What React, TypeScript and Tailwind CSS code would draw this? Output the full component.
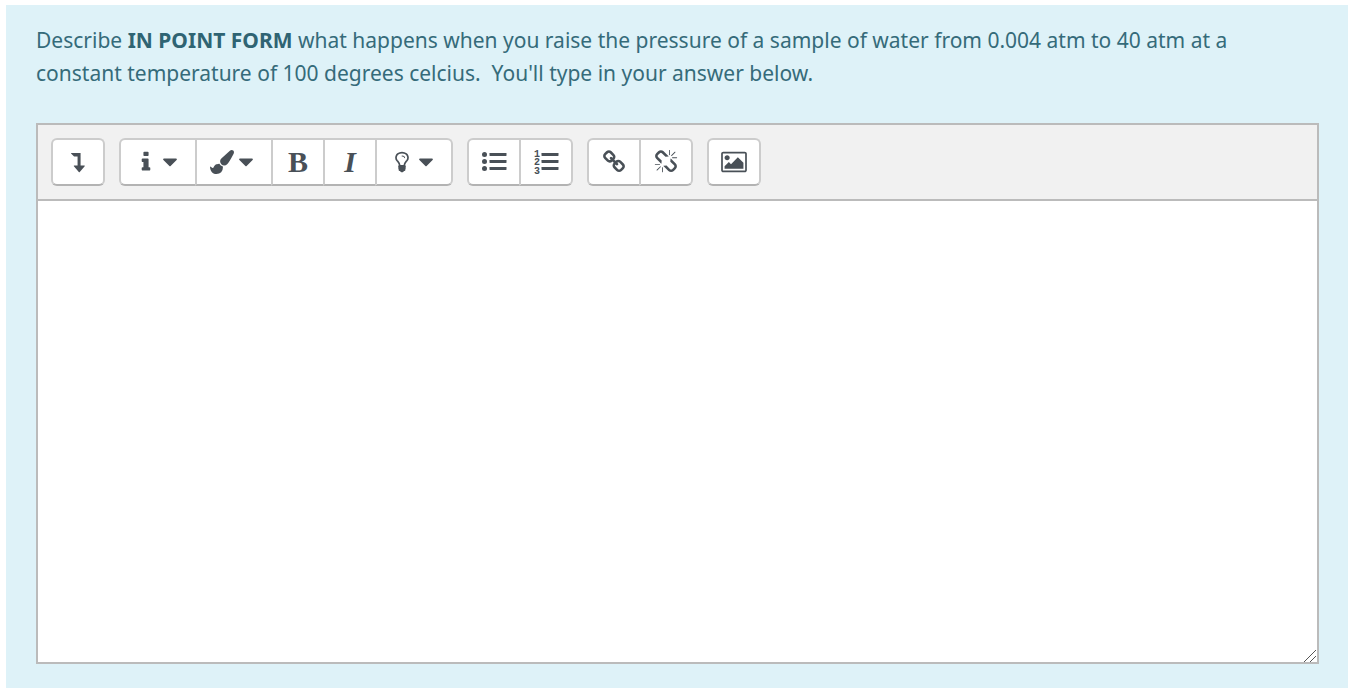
import type { ReactNode } from 'react';
import { clsx } from 'clsx';

const icons = {
	caret: 'M1408 704q0 26-19 45l-448 448q-19 19-45 19t-45-19l-448-448q-19-19-19-45t19-45 45-19h896q26 0 45 19t19 45z',
	toggle: 'M384 224h704v928h288q28 0 28 30q0 12-8 22l-368 430q-36 36-72 0l-368-430q-8-10-8-22q0-30 28-30h256v-672h-256q-14 0-24-10l-208-210q-12-36 8-36z',
	info: 'M1216 1344v128q0 26-19 45t-45 19h-512q-26 0-45-19t-19-45v-128q0-26 19-45t45-19h64v-384h-64q-26 0-45-19t-19-45v-128q0-26 19-45t45-19h384q26 0 45 19t19 45v576h64q26 0 45 19t19 45zm-128-1152v192q0 26-19 45t-45 19h-256q-26 0-45-19t-19-45v-192q0-26 19-45t45-19h256q26 0 45 19t19 45z',
	brush: 'M1615 0q70 0 122.5 46.5t52.5 116.5q0 63-45 151-332 629-465 752-97 91-218 91-126 0-216.5-92.5t-90.5-219.5q0-128 92-212l638-579q59-54 130-54zm-909 1034q39 76 106.5 130t150.5 76l1 71q4 213-129.5 347t-348.5 134q-123 0-218-46.5t-152.5-127.5-86.5-183-29-220q7 5 41 30t62 44.5 59 36.5 46 17q41 0 55-37 25-66 57.5-112.5t69.5-76 88-47.5 103-25.5 125-10.5z',
	bulb: 'M1120 576q0 13-9.5 22.5t-22.5 9.5-22.5-9.5-9.5-22.5q0-46-54-71t-106-25q-13 0-22.5-9.5t-9.5-22.5 9.5-22.5 22.5-9.5q50 0 99.5 16t87 54 37.5 90zm160 0q0-72-34.5-134t-90-101.5-123-62-136.5-22.5-136.5 22.5-123 62-90 101.5-34.5 134q0 101 68 180 10 11 30.5 33t30.5 33q128 153 141 298h228q13-145 141-298 10-11 30.5-33t30.5-33q68-79 68-180zm128 0q0 155-103 268-45 49-74.5 87t-59.5 95.5-34 107.5q47 28 47 82 0 37-25 64 25 27 25 64 0 52-45 81 13 23 13 47 0 46-31.5 71t-77.5 25q-20 44-60 70t-87 26-87-26-60-70q-46 0-77.5-25t-31.5-71q0-24 13-47-45-29-45-81 0-37 25-64-25-27-25-64 0-54 47-82-4-50-34-107.5t-59.5-95.5-74.5-87q-103-113-103-268 0-99 44.5-184.5t117-142 164-89 186.5-32.5 186.5 32.5 164 89 117 142 44.5 184.5z',
	link: 'M1520 1216q0-40-28-68l-208-208q-28-28-68-28-42 0-72 32 3 3 19 18.5t21.5 21.5 15 19 13 25.5 3.5 27.5q0 40-28 68t-68 28q-15 0-27.5-3.5t-25.5-13-19-15-21.5-21.5-18.5-19q-33 31-33 73 0 40 28 68l206 207q27 27 68 27 40 0 68-26l147-146q28-28 28-67zm-703-705q0-40-28-68l-206-207q-28-28-68-28-39 0-68 27l-147 146q-28 28-28 67 0 40 28 68l208 208q27 27 68 27 42 0 72-31-3-3-19-18.5t-21.5-21.5-15-19-13-25.5-3.5-27.5q0-40 28-68t68-28q15 0 27.5 3.5t25.5 13 19 15 21.5 21.5 18.5 19q33-31 33-73zm895 705q0 120-85 203l-147 146q-83 83-203 83-121 0-204-85l-206-207q-83-83-83-203 0-123 88-209l-88-88q-86 88-208 88-120 0-204-84l-208-208q-84-84-84-204t85-203l147-146q83-83 203-83 121 0 204 85l206 207q83 83 83 203 0 123-88 209l88 88q86-88 208-88 120 0 204 84l208 208q84 84 84 204z',
	unlink: 'M503 1271l-256 256q-10 9-23 9-12 0-23-9-9-10-9-23t9-23l256-256q10-9 23-9t23 9q9 10 9 23t-9 23zm169 41v320q0 14-9 23t-23 9-23-9-9-23v-320q0-14 9-23t23-9 23 9 9 23zm-224-224q0 14-9 23t-23 9h-320q-14 0-23-9t-9-23 9-23 23-9h320q14 0 23 9t9 23zm1264 128q0 120-85 203l-147 146q-83 83-203 83-121 0-204-85l-334-335q-21-21-42-56l239-18 273 274q28 28 68 27.5t68-27.5l147-146q28-28 28-67 0-40-28-68l-274-275 18-239q35 21 56 42l336 336q84 86 84 204zm-617-724l-239 18-273-274q-28-28-68-28-39 0-68 27l-147 146q-28 28-28 67 0 40 28 68l274 274-18 240q-35-21-56-42l-336-336q-84-86-84-204 0-120 85-203l147-146q83-83 203-83 121 0 204 85l334 335q21 21 42 56zm633 84q0 14-9 23t-23 9h-320q-14 0-23-9t-9-23 9-23 23-9h320q14 0 23 9t9 23zm-544-544v320q0 14-9 23t-23 9-23-9-9-23v-320q0-14 9-23t23-9 23 9 9 23zm407 151l-256 256q-11 9-23 9t-23-9q-9-10-9-23t9-23l256-256q10-9 23-9t23 9q9 10 9 23t-9 23z',
	picture: 'M576 576q0 80-56 136t-136 56-136-56-56-136 56-136 136-56 136 56 56 136zm1024 384v448h-1408v-192l320-320 160 160 512-512zm96-704h-1600q-13 0-22.5 9.5t-9.5 22.5v1216q0 13 9.5 22.5t22.5 9.5h1600q13 0 22.5-9.5t9.5-22.5v-1216q0-13-9.5-22.5t-22.5-9.5zm160 32v1216q0 66-47 113t-113 47h-1600q-66 0-113-47t-47-113v-1216q0-66 47-113t113-47h1600q66 0 113 47t47 113z',
};

function Icon({ name, className }: { name: keyof typeof icons; className?: string }) {
	return (
		<svg
			viewBox="0 0 1792 1792"
			fill="currentColor"
			aria-hidden="true"
			className={clsx('h-6 w-6 shrink-0 overflow-visible', className)}
		>
			<path d={icons[name]} />
		</svg>
	);
}

function BulletList() {
	return (
		<svg viewBox="0 0 24 24" fill="currentColor" aria-hidden="true" className="h-6 w-6 overflow-visible">
			{[4.5, 11.5, 18.5].map((y) => (
				<g key={y}>
					<circle cx="2.5" cy={y} r="2.5" />
					<rect x="7.5" y={y - 1.5} width="17" height="3" rx="0.4" />
				</g>
			))}
		</svg>
	);
}

function NumberedList() {
	return (
		<svg viewBox="0 0 24 24" fill="currentColor" aria-hidden="true" className="h-6 w-6 overflow-visible">
			{[4.5, 11.5, 18.5].map((y, i) => (
				<g key={y}>
					<text
						x="3"
						y={y + 2 + i * 1.5}
						textAnchor="middle"
						fontFamily="Liberation Mono, monospace"
						fontSize="10"
						fontWeight="700"
					>
						{i + 1}
					</text>
					<rect x="7.5" y={y - 1.5} width="17" height="3" rx="0.4" />
				</g>
			))}
		</svg>
	);
}

function ToolButton({ label, menu, children }: { label: string; menu?: boolean; children: ReactNode }) {
	return (
		<button
			type="button"
			aria-label={label}
			aria-haspopup={menu ? 'menu' : undefined}
			className={clsx(
				'-ml-[2px] flex h-12 items-center justify-center border-2 border-[#ccc] border-b-[#b3b3b3] bg-white text-[#495057] first:ml-0 first:rounded-l-md last:rounded-r-md hover:bg-gray-100',
				menu ? 'w-[78px]' : 'w-[54px]',
			)}
		>
			{children}
			{menu && <Icon name="caret" />}
		</button>
	);
}

function ToolGroup({ children }: { children: ReactNode }) {
	return <div className="flex">{children}</div>;
}

export default function App() {
	return (
		<div className="flex min-h-screen flex-col bg-white pt-[5px] pl-[6px] font-['Noto_Sans',sans-serif]">
			<main className="grow bg-[#def2f8] pt-[19px] pr-[29px] pb-6 pl-[30px] text-[#356b7a]">
				<label htmlFor="answer" className="mb-[33px] block pr-4 text-[21px] leading-[33px]">
					Describe <strong className="text-[#2f6473]">IN POINT FORM</strong> what happens when you raise the
					pressure of a sample of water from 0.004 atm to 40 atm at a constant temperature of 100 degrees
					celcius.&nbsp; You'll type in your answer below.
				</label>

				<div className="border-2 border-[#bbb] bg-white">
					<div
						role="toolbar"
						aria-label="Editor"
						className="flex flex-wrap gap-[14px] border-b-2 border-[#bbb] bg-[#f1f1f1] p-[13px]"
					>
						<ToolGroup>
							<ToolButton label="Show more buttons">
								<Icon name="toggle" />
							</ToolButton>
						</ToolGroup>
						<ToolGroup>
							<ToolButton label="Paragraph styles" menu>
								<Icon name="info" />
							</ToolButton>
							<ToolButton label="Font colour" menu>
								<Icon name="brush" />
							</ToolButton>
							<ToolButton label="Bold">
								<span className="font-['Liberation_Serif',serif] text-[30px] leading-6 font-bold">B</span>
							</ToolButton>
							<ToolButton label="Italic">
								<span className="font-['Liberation_Serif',serif] text-[30px] leading-6 font-bold italic">I</span>
							</ToolButton>
							<ToolButton label="Hints" menu>
								<Icon name="bulb" />
							</ToolButton>
						</ToolGroup>
						<ToolGroup>
							<ToolButton label="Unordered list">
								<BulletList />
							</ToolButton>
							<ToolButton label="Ordered list">
								<NumberedList />
							</ToolButton>
						</ToolGroup>
						<ToolGroup>
							<ToolButton label="Link">
								<Icon name="link" />
							</ToolButton>
							<ToolButton label="Unlink">
								<Icon name="unlink" />
							</ToolButton>
						</ToolGroup>
						<ToolGroup>
							<ToolButton label="Insert image">
								<Icon name="picture" />
							</ToolButton>
						</ToolGroup>
					</div>
					<div className="relative">
						<textarea
							id="answer"
							className="block h-[461px] w-full resize-y p-3 text-[21px] leading-[33px] outline-none"
						/>
						{/* larger grip over the native resizer */}
						<svg
							viewBox="0 0 15 15"
							aria-hidden="true"
							className="pointer-events-none absolute right-0 bottom-0 h-[15px] w-[15px]"
						>
							<rect width="15" height="15" fill="#fff" />
							<path d="M2 15L14 3M8 15L14 9" stroke="#555" fill="none" />
						</svg>
					</div>
				</div>
			</main>
		</div>
	);
}
